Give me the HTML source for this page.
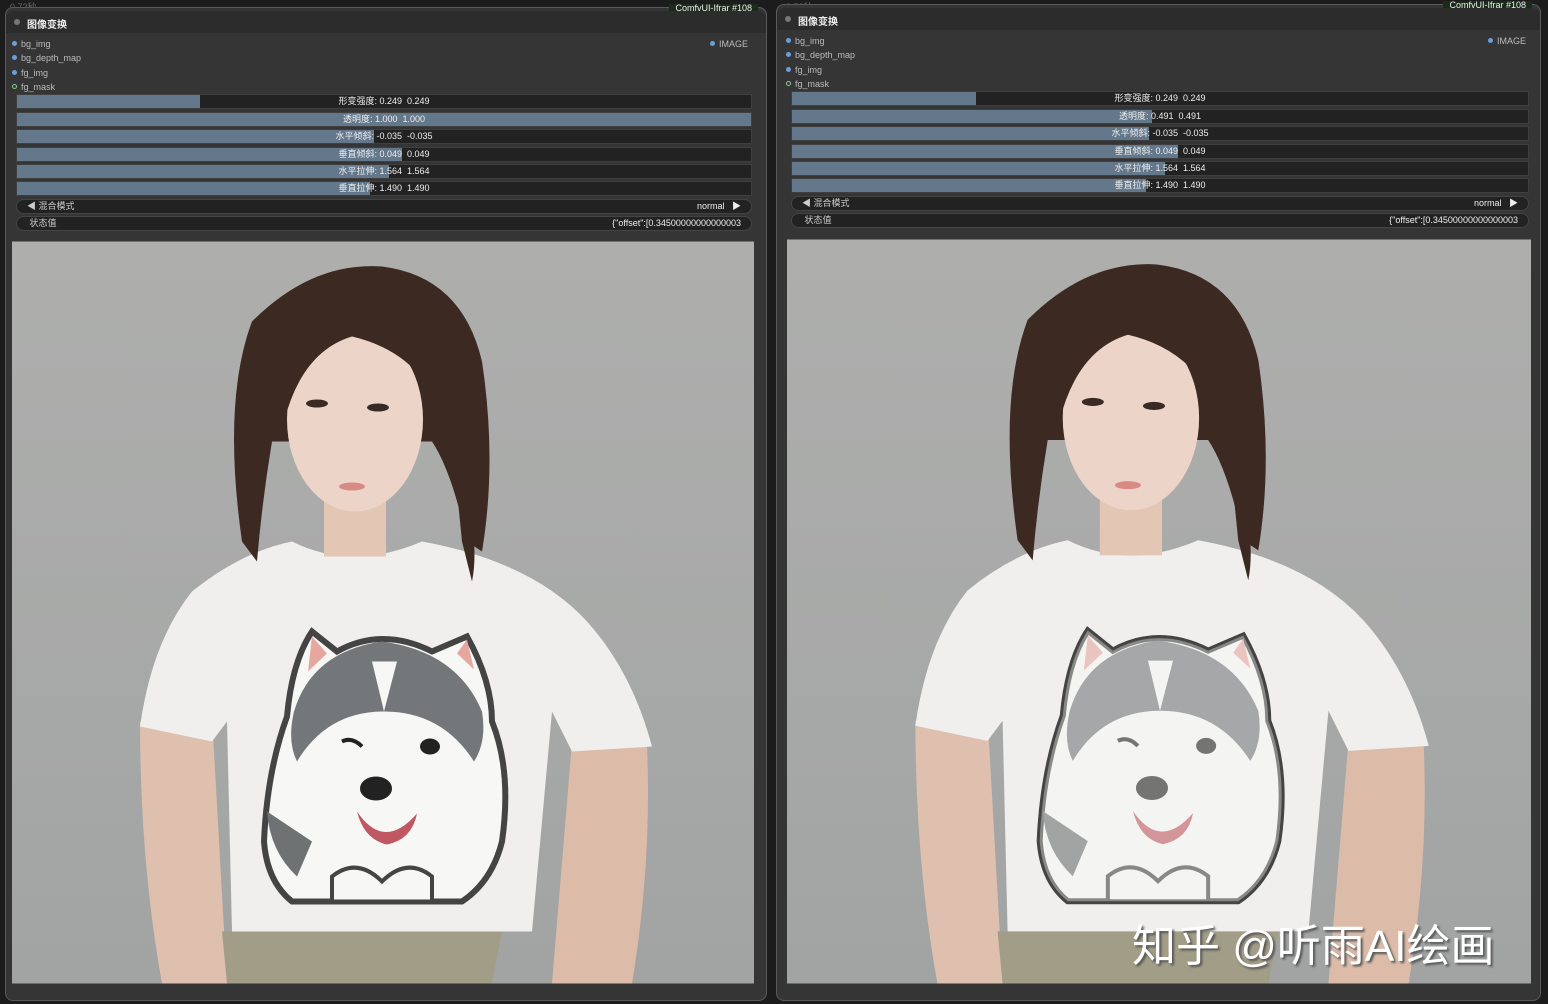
<!DOCTYPE html>
<html><head><meta charset="utf-8"><style>
*{margin:0;padding:0;box-sizing:border-box}
body{width:1548px;height:1004px;background:#1c1c1c;position:relative;overflow:hidden;font-family:"Liberation Sans","Noto Sans CJK SC",sans-serif;color:#ddd}
.panel{position:absolute;background:#353535;border:1px solid #5a5a5a;border-radius:8px}
.hdr{position:absolute;left:0;right:0;top:0;height:22px;background:#2c2c2c;border-radius:8px 8px 0 0;font-size:10px;color:#eee;font-weight:bold;padding:5px 0 0 21px}
.hdr:before{content:"";position:absolute;left:8px;top:8px;width:6px;height:6px;border-radius:50%;background:#777}
.in{position:absolute;font-size:9px;color:#bbb}
.in:before{content:"";position:absolute;left:-9px;top:2px;width:5px;height:5px;border-radius:50%;background:#6a9fd8}
.in.g:before{background:none;border:1.5px solid #8c8;width:3px;height:3px}
.sl{position:absolute;height:15px;background:#222;border:1px solid #3f3f3f;font-size:9px;color:#eee;text-align:center;line-height:13px;overflow:hidden}
.sl i{position:absolute;left:0;top:0;bottom:0;background:#64788c}
.sl span{position:relative}
.cb{position:absolute;height:15px;background:#222;border:1px solid #444;border-radius:8px;font-size:9px;color:#ccc;line-height:13px;padding:0 10px}
.cb b{float:right;font-weight:normal;color:#eee}
.img{position:absolute;overflow:hidden}
.top{position:absolute;top:0;height:7px;font-size:9px;color:#666}
.tag{position:absolute;top:-4px;background:#1b2a1b;color:#eee;font-size:9px;padding:0 6px;height:10px;line-height:8px}
</style></head><body>
<svg width="0" height="0" style="position:absolute">
<defs>
<linearGradient id="bgg" x1="0" y1="0" x2="0" y2="1"><stop offset="0" stop-color="#aeafad"/><stop offset="1" stop-color="#a2a4a4"/></linearGradient>
<g id="photo">
<rect width="742" height="742" fill="url(#bgg)"/>
<path d="M128 480 L200 475 L215 742 L150 742 Q128 620 128 480Z" fill="#dfc0ae"/>
<path d="M560 500 L635 505 Q640 620 620 742 L540 742Z" fill="#dcbca9"/>
<path d="M210 690 L490 690 L480 742 L215 742Z" fill="#a29d86"/>
<path d="M280 300 Q340 330 410 300 Q520 320 575 380 Q620 430 640 505 L560 510 L540 470 L520 690 L220 690 L215 480 L200 500 L128 485 Q140 400 180 350 Q230 310 280 300Z" fill="#f0efed"/>
<path d="M230 300 Q210 160 240 80 Q300 20 370 25 Q450 35 470 120 Q485 220 470 310 L455 300 Q440 230 420 200 L260 200 Q250 260 245 320Z" fill="#3c2a22"/>
<path d="M440 200 Q470 290 460 340 L450 300Z" fill="#3c2a22"/>
<rect x="312" y="240" width="62" height="75" fill="#e4c6b5"/>
<ellipse cx="343" cy="178" rx="68" ry="92" fill="#ecd5c8"/>
<path d="M265 90 Q330 30 420 80 Q440 110 430 170 Q405 110 340 95 Q290 110 272 180 Q255 130 265 90Z" fill="#3c2a22"/>
<ellipse cx="305" cy="162" rx="11" ry="4" fill="#3a2a25"/><ellipse cx="366" cy="166" rx="11" ry="4" fill="#3a2a25"/>
<ellipse cx="340" cy="245" rx="13" ry="4" fill="#d88a86"/>
<g class="dogg">
<path d="M275 475 Q280 420 300 390 L325 410 Q370 385 420 410 L455 395 Q480 440 480 480 Q500 530 490 600 Q480 640 450 660 L280 660 Q255 640 252 600 Q255 530 275 475Z" fill="#f7f7f5" stroke="#444" stroke-width="6"/>
<path d="M282 470 Q300 410 370 400 Q445 410 470 470 Q475 500 462 520 Q430 470 372 470 Q315 470 285 520 Q275 500 282 470Z" fill="#74777a"/>
<path d="M360 420 L372 470 L385 420Z" fill="#f7f7f5"/>
<path d="M300 395 L315 412 L296 430Z M455 398 L445 412 L462 428Z" fill="#e6a7a0"/>
<ellipse cx="364" cy="547" rx="16" ry="12" fill="#222"/>
<path d="M345 570 Q372 610 405 572 Q400 598 375 603 Q352 598 345 570Z" fill="#c05863"/>
<ellipse cx="418" cy="505" rx="10" ry="8" fill="#222"/>
<path d="M330 500 Q340 495 350 505" stroke="#222" stroke-width="4" fill="none"/>
<path d="M255 570 Q258 610 285 635 L300 600Z" fill="#6f7273"/>
<path d="M320 635 Q345 615 370 640 Q395 615 420 635 L420 660 L320 660Z" fill="#f7f7f5" stroke="#444" stroke-width="4"/>
</g>
</g>
</defs></svg>

<div class="top" style="left:10px">0.72秒</div>
<div class="panel" style="left:5px;top:7px;width:762px;height:994px">
<div class="tag" style="right:8px">ComfyUI-Ifrar #108</div>
<div class="hdr" style="top:3px">图像变换</div>
<div class="in" style="left:15px;top:31px">bg_img</div>
<div class="in" style="left:15px;top:45px">bg_depth_map</div>
<div class="in" style="left:15px;top:60px">fg_img</div>
<div class="in g" style="left:15px;top:74px">fg_mask</div>
<div class="in" style="right:18px;top:31px">IMAGE</div>
<div class="sl" style="left:10px;top:86px;width:736px"><i style="width:183px"></i><span>形变强度: 0.249&nbsp; 0.249</span></div>
<div class="sl" style="left:10px;top:104px;width:736px"><i style="width:100%"></i><span>透明度: 1.000&nbsp; 1.000</span></div>
<div class="sl" style="left:10px;top:121px;width:736px"><i style="width:357px"></i><span>水平倾斜: -0.035&nbsp; -0.035</span></div>
<div class="sl" style="left:10px;top:139px;width:736px"><i style="width:385px"></i><span>垂直倾斜: 0.049&nbsp; 0.049</span></div>
<div class="sl" style="left:10px;top:156px;width:736px"><i style="width:372px"></i><span>水平拉伸: 1.564&nbsp; 1.564</span></div>
<div class="sl" style="left:10px;top:173px;width:736px"><i style="width:353px"></i><span>垂直拉伸: 1.490&nbsp; 1.490</span></div>
<div class="cb" style="left:10px;top:191px;width:736px">◀ 混合模式<b>normal&nbsp;&nbsp; ▶</b></div>
<div class="cb" style="left:10px;top:208px;width:736px">&nbsp;状态值<b>{"offset":[0.34500000000000003</b></div>
<svg class="img" style="left:6px;top:233px" width="742" height="743" viewBox="0 0 742 742"><use href="#photo"/></svg>
</div>

<div class="top" style="left:786px">0.72秒</div>
<div class="panel" style="left:776px;top:4px;width:765px;height:997px">
<div class="tag" style="right:8px">ComfyUI-Ifrar #108</div>
<div class="hdr" style="top:3px">图像变换</div>
<div class="in" style="left:18px;top:31px">bg_img</div>
<div class="in" style="left:18px;top:45px">bg_depth_map</div>
<div class="in" style="left:18px;top:60px">fg_img</div>
<div class="in g" style="left:18px;top:74px">fg_mask</div>
<div class="in" style="right:14px;top:31px">IMAGE</div>
<div class="sl" style="left:14px;top:86px;width:738px"><i style="width:184px"></i><span>形变强度: 0.249&nbsp; 0.249</span></div>
<div class="sl" style="left:14px;top:104px;width:738px"><i style="width:360px"></i><span>透明度: 0.491&nbsp; 0.491</span></div>
<div class="sl" style="left:14px;top:121px;width:738px"><i style="width:357px"></i><span>水平倾斜: -0.035&nbsp; -0.035</span></div>
<div class="sl" style="left:14px;top:139px;width:738px"><i style="width:386px"></i><span>垂直倾斜: 0.049&nbsp; 0.049</span></div>
<div class="sl" style="left:14px;top:156px;width:738px"><i style="width:373px"></i><span>水平拉伸: 1.564&nbsp; 1.564</span></div>
<div class="sl" style="left:14px;top:173px;width:738px"><i style="width:354px"></i><span>垂直拉伸: 1.490&nbsp; 1.490</span></div>
<div class="cb" style="left:14px;top:191px;width:738px">◀ 混合模式<b>normal&nbsp;&nbsp; ▶</b></div>
<div class="cb" style="left:14px;top:208px;width:738px">&nbsp;状态值<b>{"offset":[0.34500000000000003</b></div>
<svg class="img" style="left:10px;top:234px" width="744" height="745" viewBox="0 0 742 742"><use href="#photo"/><path d="M275 475 Q280 420 300 390 L325 410 Q370 385 420 410 L455 395 Q480 440 480 480 Q500 530 490 600 Q480 640 450 660 L280 660 Q255 640 252 600 Q255 530 275 475Z" fill="#f0efed" opacity="0.4"/></svg>
</div>
<div style="position:absolute;left:1132px;top:910px;font-size:44px;color:#fff;text-shadow:2px 2px 2px #555;white-space:nowrap">知乎 @听雨AI绘画</div>
</body></html>
